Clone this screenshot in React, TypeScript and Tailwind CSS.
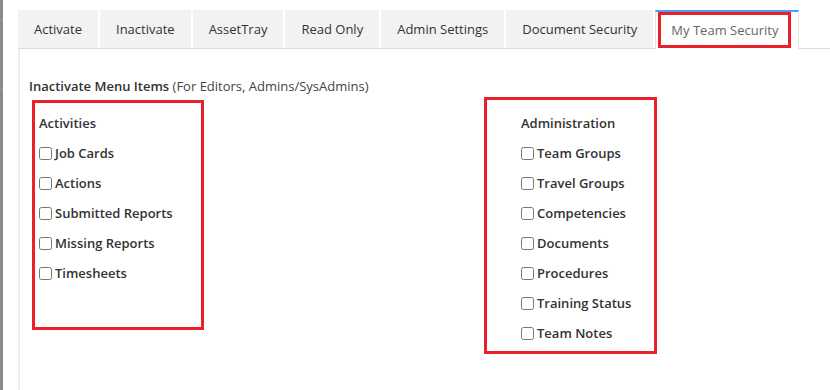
import React from "react";

const tabs = ["Activate", "Inactivate", "AssetTray", "Read Only", "Admin Settings", "Document Security"];
const activities = ["Job Cards", "Actions", "Submitted Reports", "Missing Reports", "Timesheets"];
const admin = ["Team Groups", "Travel Groups", "Competencies", "Documents", "Procedures", "Training Status", "Team Notes"];

function Row({ label }: { label: string }) {
  return (
    <label className="flex h-[30px] items-center font-semibold text-[#333]">
      <input type="checkbox" className="m-0 mr-[3px] h-[13px] w-[13px]" />
      <span>{label}</span>
    </label>
  );
}

export default function App() {
  return (
    <div
      className="flex h-[390px] w-[830px] overflow-hidden bg-white text-[13px] leading-[18px]"
      style={{ fontFamily: '"Open Sans", "Noto Sans", sans-serif' }}
    >
      <div className="flex w-[3px] flex-col bg-[#8a8a8a]">
        <div className="h-[19px]" />
        <div className="h-[1px] bg-[#a0a0a0]" />
        <div className="h-[69px]" />
        <div className="h-[1px] bg-[#a0a0a0]" />
      </div>
      <div className="ml-[15px] flex flex-1 flex-col pt-[10px]">
        <div className="flex h-[39px] gap-[2px] border-b border-[#dcdcdc]">
          {tabs.map((t) => (
            <div key={t} className="flex h-[38px] items-center bg-[#f2f2f2] px-[16px] text-[#333]">
              {t}
            </div>
          ))}
          <div className="-mb-px flex h-[39px] items-start border-x border-t-2 border-[#e4e4e4] border-t-[#4a9ff5] bg-white pl-[2px] pr-[7px]">
            <span className="flex h-[36px] items-center border-[3px] border-[#e8212a] px-[10px] text-[#666]">
              My Team Security
            </span>
          </div>
        </div>
        <div className="flex flex-1 flex-col border-l-2 border-[#eeeeee] pl-[9px] pt-[28px]">
          <div className="text-[#333]">
            <span className="font-semibold">Inactivate Menu Items</span>{" "}
            <span className="text-[#444]">(For Editors, Admins/SysAdmins)</span>
          </div>
          <div className="flex items-start gap-[280px] pt-[2px]">
            <div className="ml-[3px] mt-[3px] flex h-[230px] w-[172px] flex-col border-[3px] border-[#e8212a] pl-[4px] pt-[5px]">
              <div className="flex h-[30px] items-center font-semibold text-[#333]">Activities</div>
              {activities.map((a) => (
                <Row key={a} label={a} />
              ))}
            </div>
            <div className="flex w-[173px] flex-col border-[3px] border-[#e8212a] pb-[3px] pl-[34px] pt-[8px]">
              <div className="flex h-[30px] items-center font-semibold text-[#333]">Administration</div>
              {admin.map((a) => (
                <Row key={a} label={a} />
              ))}
            </div>
          </div>
        </div>
      </div>
    </div>
  );
}
